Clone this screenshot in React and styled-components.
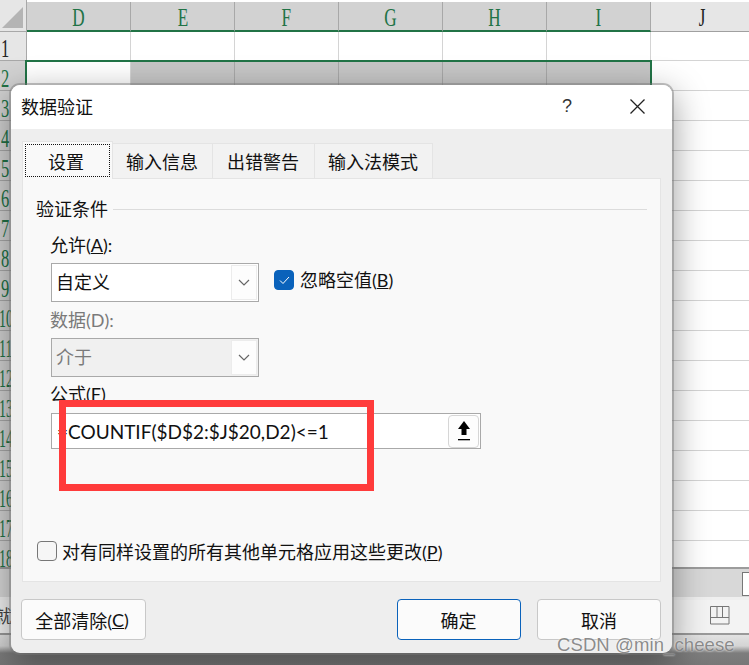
import React from 'react';
import styled, { createGlobalStyle } from 'styled-components';

const Global = createGlobalStyle`
    html, body {
        margin: 0;
        padding: 0;
        background: #fff;
    }
    * {
        box-sizing: border-box;
    }
`;

const cjk = `Lato, "Noto Sans CJK SC", sans-serif`;

//sheet
const Page = styled.div`
    position: relative;
    width: 749px;
    height: 665px;
    overflow: hidden;
    background: #fff;
    font-family: ${cjk};
    font-size: 18px;
    color: #111;
`;
const Sheet = styled.div`
    display: flex;
    flex-direction: column;
    height: 100%;
`;
const HeaderRow = styled.div`
    display: flex;
    height: 32px;
    flex-shrink: 0;
`;
const Corner = styled.div`
    width: 27px;
    height: 32px;
    flex-shrink: 0;
    padding: 7px 3px 0 2px;
    background: #e6e6e6;
    border-bottom: 1px solid #a8a8a8;
    border-right: 1px solid #a8a8a8;
`;
const ColHead = styled.div`
    display: flex;
    justify-content: center;
    align-items: flex-start;
    padding-top: 3px;
    width: 104px;
    flex-shrink: 0;
    margin-top: 2px;
    height: 30px;
    font-family: "Liberation Serif", serif;
    font-size: 26px;
    line-height: 26px;
    color: ${props => props.$active ? '#217346' : '#222'};
    background: ${props => props.$active ? '#d2d2d2' : '#e6e6e6'};
    border-right: 1px solid ${props => props.$active ? '#a8a8a8' : 'transparent'};
    border-bottom: ${props => props.$active ? '2px solid #217346' : '1px solid #a0a0a0'};
`;
const Narrow = styled.span`
    display: inline-block;
    transform: scaleX(0.66);
`;
const Rows = styled.div`
    height: 535px;
    flex-shrink: 0;
    overflow: hidden;
`;
const Row = styled.div`
    display: flex;
    height: ${props => props.$first ? '29px' : '30px'};
`;
const RowHead = styled.div`
    display: flex;
    align-items: flex-end;
    width: 27px;
    flex-shrink: 0;
    padding: 0 0 1px ${props => props.$wide ? '0' : '1px'};
    font-family: "Liberation Serif", serif;
    font-size: 25px;
    line-height: 20px;
    color: ${props => props.$active ? '#217346' : '#222'};
    background: ${props => props.$active ? '#d2d2d2' : '#e6e6e6'};
    border-bottom: 1px solid #a8a8a8;
    border-right: 1px solid #a8a8a8;
`;
const RowNum = styled.span`
    display: inline-block;
    margin-left: ${props => props.$wide ? '-1px' : '0'};
    transform: scaleX(${props => props.$wide ? 0.56 : 0.66});
    transform-origin: left center;
    white-space: nowrap;
`;
const Cell = styled.div`
    width: 104px;
    flex-shrink: 0;
    background: ${props => props.$selected ? '#c6c6c6' : '#fff'};
    border-right: 1px solid ${props => props.$last ? 'transparent' : props.$selected ? '#a8a8a8' : '#d4d4d4'};
    border-bottom: 1px solid ${props => props.$selected ? '#a8a8a8' : '#d4d4d4'};
`;
const Frame = styled.div`
    position: absolute;
    left: 25px;
    top: 60px;
    width: 627px;
    height: 300px;
    border: 2px solid #217346;
`;
const ScrollStrip = styled.div`
    display: flex;
    justify-content: flex-end;
    align-items: flex-start;
    height: 33px;
    flex-shrink: 0;
    padding-top: 3px;
    background: #d8d8d8;
    border-top: 2px solid #9c9c9c;
    border-bottom: 3px solid #efefef;
`;
const Thumb = styled.div`
    width: 7px;
    height: 24px;
    background: #fff;
    border: 1px solid #777;
    border-right: none;
`;
const StatusBar = styled.div`
    display: flex;
    justify-content: space-between;
    align-items: center;
    height: 35px;
    flex-shrink: 0;
    padding: 0 19px 3px 0;
    background: #f3f3f3;
    border-bottom: 2px solid #9a9a9a;
    font-size: 18px;
    color: #444;
`;
const StatusText = styled.span`
    margin-left: -6px;
`;
const Bottom = styled.div`
    flex: 1;
    background: linear-gradient(#e2e2e2 0, #d4d4d4 11px, #7d7d7d 18px, #777 100%);
`;

//dialog
const Dialog = styled.div`
    position: absolute;
    left: 11px;
    top: 85px;
    width: 661px;
    height: 568px;
    display: flex;
    flex-direction: column;
    background: #eee;
    border-radius: 9px;
    overflow: hidden;
`;
const DialogShadow = styled.div`
    position: absolute;
    left: 11px;
    top: 85px;
    width: 661px;
    height: 568px;
    border-radius: 9px;
    box-shadow: 0 0 0 2px rgba(120, 120, 120, 0.45), 0 10px 34px 2px rgba(0, 0, 0, 0.38);
`;
const TitleBar = styled.div`
    display: flex;
    align-items: center;
    height: 44px;
    flex-shrink: 0;
    padding: 0 27px 2px 10px;
    background: #fff;
`;
const Title = styled.div`
    flex: 1;
`;
const Help = styled.div`
    width: 10px;
    margin-right: 58px;
    font-family: "Liberation Sans", sans-serif;
    font-size: 18px;
    color: #333;
`;
const Body = styled.div`
    display: flex;
    flex-direction: column;
    flex: 1;
    padding: 13px 11px 13px 11px;
`;
const Tabs = styled.div`
    display: flex;
    align-items: flex-end;
    height: 37px;
    flex-shrink: 0;
    position: relative;
    z-index: 1;
    margin-bottom: -1px;
`;
const Tab = styled.div`
    display: flex;
    justify-content: center;
    align-items: center;
    width: ${props => props.$w}px;
    height: ${props => props.$active ? '38px' : '36px'};
    background: ${props => props.$active ? '#f9f9f9' : '#f2f2f2'};
    border: 1px solid #e4e4e4;
    border-left: ${props => props.$active ? '1px solid #e4e4e4' : 'none'};
    border-bottom: ${props => props.$active ? 'none' : '1px solid #e4e4e4'};
    padding: ${props => props.$active ? '2px' : '0 1px 0 0'};
`;
const TabFocus = styled.div`
    display: flex;
    justify-content: center;
    align-items: center;
    width: 100%;
    height: 33px;
    padding-right: 3px;
    border: 1px dotted #111;
`;
const Panel = styled.div`
    display: flex;
    flex-direction: column;
    height: 404px;
    flex-shrink: 0;
    padding: 19px 13px 17px 13px;
    background: #f9f9f9;
    border: 1px solid #e4e4e4;
`;
const Legend = styled.div`
    display: flex;
    align-items: center;
    gap: 5px;
    height: 22px;
    line-height: 22px;
`;
const LegendLine = styled.div`
    flex: 1;
    height: 1px;
    background: #dcdcdc;
`;
const Section = styled.div`
    display: flex;
    flex-direction: column;
    padding-left: 15px;
`;
const Label = styled.div`
    height: 24px;
    line-height: 22px;
    margin-top: ${props => props.$top}px;
    margin-bottom: ${props => props.$bottom}px;
    margin-left: -1px;
    color: ${props => props.$disabled ? '#7a7a7a' : '#111'};
`;
const ComboRow = styled.div`
    display: flex;
    align-items: center;
`;
const Combo = styled.div`
    display: flex;
    align-items: center;
    justify-content: space-between;
    width: 208px;
    height: 39px;
    padding: 1px 1px 1px 4px;
    background: ${props => props.$disabled ? '#f0f0f0' : '#fff'};
    border: 1px solid #a9a9a9;
    color: ${props => props.$disabled ? '#7a7a7a' : '#111'};
`;
const ComboValue = styled.span`
    margin-top: -3px;
`;
const ComboButton = styled.div`
    display: flex;
    justify-content: center;
    align-items: center;
    width: 26px;
    height: 35px;
    background: #fdfdfd;
    border: 1px solid #ececec;
`;
const CheckBox = styled.div`
    display: flex;
    justify-content: center;
    align-items: center;
    width: 20px;
    height: 20px;
    flex-shrink: 0;
    border-radius: 4px;
    background: ${props => props.$checked ? '#0a62bb' : '#f6f6f6'};
    border: 1px solid ${props => props.$checked ? '#0a62bb' : '#777'};
`;
const CheckRow = styled.div`
    display: flex;
    align-items: center;
    gap: 6px;
    margin-left: 15px;
    margin-top: -5px;
`;
const CheckText = styled.span`
    margin-top: -3px;
`;
const FormulaBox = styled.div`
    display: flex;
    align-items: center;
    justify-content: space-between;
    width: 430px;
    height: 36px;
    padding: 1px 1px 1px 5px;
    background: #fff;
    border: 1px solid #a9a9a9;
`;
const FormulaText = styled.div`
    font-family: Lato, sans-serif;
    font-size: 19px;
    color: #111;
    white-space: nowrap;
`;
const RefButton = styled.div`
    display: flex;
    justify-content: center;
    align-items: center;
    width: 31px;
    height: 33px;
    background: #fdfdfd;
    border: 1px solid #d6d6d6;
    border-radius: 4px;
`;
const ApplyRow = styled.div`
    display: flex;
    align-items: center;
    gap: 5px;
    margin-top: auto;
    margin-left: 1px;
`;
const Footer = styled.div`
    display: flex;
    align-items: flex-start;
    gap: 16px;
    margin-top: 17px;
    margin-left: -1px;
`;
const Button = styled.div`
    display: flex;
    justify-content: center;
    align-items: center;
    width: ${props => props.$w}px;
    height: 41px;
    margin-left: ${props => props.$push ? 'auto' : '0'};
    padding-right: ${props => props.$pad || 0}px;
    background: #fbfbfb;
    border: 1px solid ${props => props.$primary ? '#0a62bb' : '#c8c8c8'};
    border-radius: 4px;
`;

//overlays
const RedBox = styled.div`
    position: absolute;
    left: 59px;
    top: 400px;
    width: 315px;
    height: 91px;
    border: 7px solid #ff3b3b;
`;
const Watermark = styled.div`
    position: absolute;
    left: 557px;
    top: 634px;
    font-family: "Liberation Sans", sans-serif;
    font-size: 18.5px;
    line-height: 22px;
    letter-spacing: 0.1px;
    white-space: nowrap;
    color: rgba(120, 120, 120, 0.85);
    text-shadow: 0 0 2px rgba(255, 255, 255, 0.9);
`;

//icons
const CornerIcon = () => (
    <svg width="21" height="21" viewBox="0 0 21 21">
        <polygon points="21,0 21,21 0,21" fill="#b4b4b4" />
    </svg>
);
const Chevron = () => (
    <svg width="12" height="7" viewBox="0 0 12 7" fill="none">
        <path d="M1 1l5 5 5-5" stroke="#666" strokeWidth="1.2" />
    </svg>
);
const Tick = () => (
    <svg width="11" height="9" viewBox="0 0 11 9" fill="none">
        <path d="M1 4.500l3 3 6-6.500" stroke="#fff" strokeWidth="1" />
    </svg>
);
const CloseIcon = () => (
    <svg width="15" height="15" viewBox="0 0 15 15" fill="none">
        <path d="M.5.5l14 14M14.500.5l-14 14" stroke="#222" strokeWidth="1.3" />
    </svg>
);
const UpIcon = () => (
    <svg width="14" height="20" viewBox="0 0 14 20">
        <path d="M7 0l6 8h-3.500v6h-5V8H1z" fill="#000" />
        <rect x="1" y="18" width="12" height="1.300" fill="#000" />
    </svg>
);
const LayoutIcon = () => (
    <svg width="20" height="19" viewBox="0 0 20 19" fill="none">
        <path d="M.5.5h18.500v17.500H.5zM.5 11.500h18.500M7 .5v11M12.500 .5v11" stroke="#777" strokeWidth="1" />
    </svg>
);

const columns = ['D', 'E', 'F', 'G', 'H', 'I'];
const rowNumbers = Array.from({ length: 18 }, (_, i) => i + 1);

const App = () => {
    return (
        <Page>
            <Global />
            <Sheet>
                <HeaderRow>
                    <Corner><CornerIcon /></Corner>
                    {columns.map(c => (
                        <ColHead key={c} $active><Narrow>{c}</Narrow></ColHead>
                    ))}
                    <ColHead><Narrow>J</Narrow></ColHead>
                </HeaderRow>
                <Rows>
                    {rowNumbers.map(n => (
                        <Row key={n} $first={n === 1}>
                            <RowHead $active={n > 1} $wide={n > 9}>
                                <RowNum $wide={n > 9}>{n}</RowNum>
                            </RowHead>
                            {columns.map((c, i) => (
                                <Cell key={c} $selected={n > 1 && i > 0} />
                            ))}
                            <Cell $last />
                        </Row>
                    ))}
                </Rows>
                <ScrollStrip><Thumb /></ScrollStrip>
                <StatusBar>
                    <StatusText>就绪</StatusText>
                    <LayoutIcon />
                </StatusBar>
                <Bottom />
            </Sheet>
            <Frame />
            <DialogShadow />
            <Dialog>
                <TitleBar>
                    <Title>数据验证</Title>
                    <Help>?</Help>
                    <CloseIcon />
                </TitleBar>
                <Body>
                    <Tabs>
                        <Tab $w={91} $active><TabFocus>设置</TabFocus></Tab>
                        <Tab $w={100}>输入信息</Tab>
                        <Tab $w={102}>出错警告</Tab>
                        <Tab $w={118}>输入法模式</Tab>
                    </Tabs>
                    <Panel>
                        <Legend>验证条件<LegendLine /></Legend>
                        <Section>
                            <Label $top={14} $bottom={5}>允许(<u>A</u>):</Label>
                            <ComboRow>
                                <Combo>
                                    <ComboValue>自定义</ComboValue>
                                    <ComboButton><Chevron /></ComboButton>
                                </Combo>
                                <CheckRow>
                                    <CheckBox $checked><Tick /></CheckBox>
                                    <CheckText>忽略空值(<u>B</u>)</CheckText>
                                </CheckRow>
                            </ComboRow>
                            <Label $top={7} $bottom={5} $disabled>数据(D):</Label>
                            <Combo $disabled>
                                <ComboValue>介于</ComboValue>
                                <ComboButton><Chevron /></ComboButton>
                            </Combo>
                            <Label $top={6} $bottom={6}>公式(F)</Label>
                            <FormulaBox>
                                <FormulaText>=COUNTIF($D$2:$J$20,D2)&lt;=1</FormulaText>
                                <RefButton><UpIcon /></RefButton>
                            </FormulaBox>
                        </Section>
                        <ApplyRow>
                            <CheckBox />
                            <span>对有同样设置的所有其他单元格应用这些更改(<u>P</u>)</span>
                        </ApplyRow>
                    </Panel>
                    <Footer>
                        <Button $w={125} $pad={3}>全部清除(<u>C</u>)</Button>
                        <Button $w={124} $push $primary $pad={1}>确定</Button>
                        <Button $w={124}>取消</Button>
                    </Footer>
                </Body>
            </Dialog>
            <RedBox />
            <Watermark>CSDN @min_cheese</Watermark>
        </Page>
    );
};
export default App;
